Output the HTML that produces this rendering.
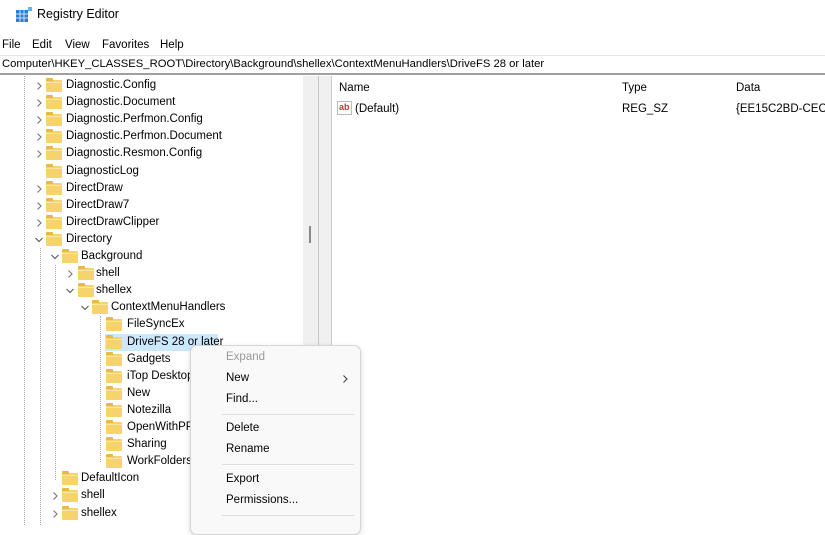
<!DOCTYPE html>
<html><head><style>
*{margin:0;padding:0;box-sizing:border-box}
body{width:825px;height:525px;overflow:hidden;background:#fff;font-family:"Liberation Sans",sans-serif;font-size:11.5px;color:#000;position:relative}
.a{position:absolute;white-space:nowrap}
.f{position:absolute;width:16px;height:12px;background:#f7d36b;border-radius:1px}
.f:before{content:"";position:absolute;left:0;top:-2px;width:7px;height:3px;background:#e8b94a;border-radius:1px 1px 0 0}
.f:after{content:"";position:absolute;left:0;right:0;top:2px;height:1px;background:#fbe6a6}
.ex{position:absolute}
.mi{position:absolute;left:226px;font-size:11.5px}
.sep{position:absolute;left:222px;width:132px;height:1px;background:#ddd}
</style></head><body>
<svg class="a" style="left:16px;top:7px" width="16" height="15" viewBox="0 0 16 15"><rect x="0" y="3" width="12" height="12" fill="#2b7cd3"/><g stroke="#cfe3f8" stroke-width="1"><line x1="4" y1="3" x2="4" y2="15"/><line x1="8" y1="3" x2="8" y2="15"/><line x1="0" y1="7" x2="12" y2="7"/><line x1="0" y1="11" x2="12" y2="11"/></g><rect x="12" y="0" width="4" height="4" fill="#6ab0ee"/></svg>
<div class="a" style="left:37px;top:7px;font-size:12.5px">Registry Editor</div>
<div class="a" style="left:2px;top:39px">File</div>
<div class="a" style="left:32px;top:39px">Edit</div>
<div class="a" style="left:65px;top:39px">View</div>
<div class="a" style="left:102px;top:39px">Favorites</div>
<div class="a" style="left:160px;top:39px">Help</div>
<div class="a" style="left:0;top:55px;width:825px;height:20px;border-top:1px solid #e6e6e6;border-bottom:2px solid #a0a0a0"></div>
<div class="a" style="left:2px;top:58px;font-size:11.25px">Computer\HKEY_CLASSES_ROOT\Directory\Background\shellex\ContextMenuHandlers\DriveFS 28 or later</div>
<div class="a" style="left:303px;top:76px;width:15px;height:449px;background:#f0f0f0"></div>
<div class="a" style="left:309px;top:226px;width:2px;height:17px;background:#888"></div>
<div class="a" style="left:318px;top:76px;width:1px;height:449px;background:#c8c8c8"></div>
<div class="a" style="left:319px;top:76px;width:12px;height:449px;background:#f0f0f0"></div>
<div class="a" style="left:331px;top:76px;width:1px;height:449px;background:#c8c8c8"></div>
<div class="a" style="left:24px;top:76px;width:0;height:449px;border-left:1px dotted #aaa"></div>
<div class="a" style="left:40px;top:248px;width:0;height:277px;border-left:1px dotted #aaa"></div>
<div class="a" style="left:55px;top:265px;width:0;height:215px;border-left:1px dotted #aaa"></div>
<div class="a" style="left:100px;top:316px;width:0;height:146px;border-left:1px dotted #aaa"></div>
<div class="a" style="left:339px;top:82px">Name</div>
<div class="a" style="left:622px;top:82px">Type</div>
<div class="a" style="left:736px;top:82px">Data</div>
<div class="a" style="left:337px;top:101px;width:15px;height:14px;border:1px solid #bbb;background:#fff;color:#c0392b;font-size:9px;font-weight:bold;line-height:11px;padding-left:1px">ab</div>
<div class="a" style="left:355px;top:103px">(Default)</div>
<div class="a" style="left:622px;top:103px">REG_SZ</div>
<div class="a" style="left:736px;top:103px">{EE15C2BD-CECB-</div>
<div class="a" style="left:105px;top:334px;width:113px;height:17px;background:#cce8ff"></div>
<div id="tree"></div>
<script>
var R=[[0,1,"Diagnostic.Config"],[0,1,"Diagnostic.Document"],[0,1,"Diagnostic.Perfmon.Config"],[0,1,"Diagnostic.Perfmon.Document"],[0,1,"Diagnostic.Resmon.Config"],[0,0,"DiagnosticLog"],[0,1,"DirectDraw"],[0,1,"DirectDraw7"],[0,1,"DirectDrawClipper"],[0,2,"Directory"],[1,2,"Background"],[2,1,"shell"],[2,2,"shellex"],[3,2,"ContextMenuHandlers"],[4,0," FileSyncEx"],[4,0,"DriveFS 28 or later"],[4,0,"Gadgets"],[4,0,"iTop Desktop"],[4,0,"New"],[4,0,"Notezilla"],[4,0,"OpenWithPP"],[4,0,"Sharing"],[4,0,"WorkFolders"],[1,0,"DefaultIcon"],[1,1,"shell"],[1,1,"shellex"]];
var EX=[35,51,66,81,96],FX=[46,62,78,92,106],TX=[66,81,96,111,127],h="";
R.forEach(function(r,i){var t=Math.round(77+17.1*i),l=r[0];
if(r[1]==1)h+='<svg class="ex" style="left:'+EX[l]+'px;top:'+(t+4)+'px" width="8" height="10"><path d="M2.5 1.5L6 5L2.5 8.5" fill="none" stroke="#777" stroke-width="1.1"/></svg>';
if(r[1]==2)h+='<svg class="ex" style="left:'+(EX[l]-1)+'px;top:'+(t+5)+'px" width="10" height="8"><path d="M1.5 2L5 5.5L8.5 2" fill="none" stroke="#555" stroke-width="1.1"/></svg>';
h+='<div class="f" style="left:'+FX[l]+'px;top:'+(t+3)+'px"></div>';
h+='<div class="a" style="left:'+TX[l]+'px;top:'+(t+2)+'px">'+r[2]+'</div>';});
document.getElementById("tree").innerHTML=h;
</script>
<div class="a" style="left:190px;top:345px;width:171px;height:190px;background:#f9f9f9;border:1px solid #d6d6d6;border-radius:7px;box-shadow:0 2px 6px rgba(0,0,0,.15)"></div>
<div class="mi" style="top:351px;color:#9a9a9a">Expand</div>
<div class="mi" style="top:372px">New</div>
<svg class="a" style="left:341px;top:374px" width="8" height="10"><path d="M2.5 1.5L6 5L2.5 8.5" fill="none" stroke="#444" stroke-width="1.1"/></svg>
<div class="mi" style="top:393px">Find...</div>
<div class="sep" style="top:414px"></div>
<div class="mi" style="top:422px">Delete</div>
<div class="mi" style="top:443px">Rename</div>
<div class="sep" style="top:464px"></div>
<div class="mi" style="top:473px">Export</div>
<div class="mi" style="top:494px">Permissions...</div>
<div class="sep" style="top:515px"></div>
</body></html>
